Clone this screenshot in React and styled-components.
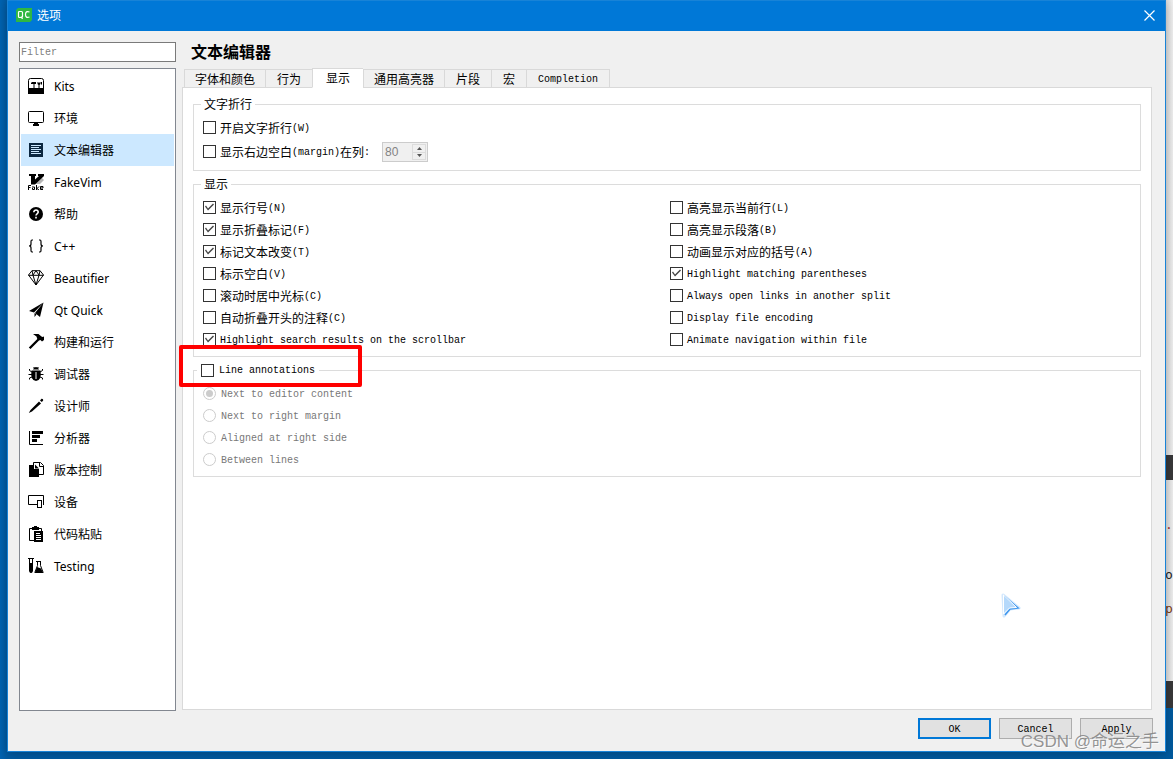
import React from 'react';
import styled, { createGlobalStyle, css } from 'styled-components';

const cjk = '"Noto Sans CJK SC", sans-serif';
const mono = `"Liberation Mono", ${cjk}`;

const GlobalStyle = createGlobalStyle`
  *, *::before, *::after { box-sizing: border-box; }
  body { margin: 0; font: 12px/14px ${cjk}; color: #000; }
  button, input { font: inherit; color: inherit; margin: 0; }
`;

/* ---------- desktop and window frame ---------- */

const Desktop = styled.div`
  display: flex;
  min-height: 100vh;
  padding-left: 7px;
  overflow: hidden;
  background: linear-gradient(90deg, #0063b1 0, #005ba3 7px, #005a9e 100%);
`;

const Window = styled.main`
  position: relative;
  z-index: 1;
  flex: 1;
  min-width: 0;
  display: flex;
  flex-direction: column;
  margin-bottom: 7px;
  border: 1px solid #1883d7;
  background: #f0f0f0;
  box-shadow: 0 2px 10px rgba(0, 0, 0, 0.25);
`;

const TitleBar = styled.header`
  display: flex;
  align-items: center;
  gap: 5px;
  height: 30px;
  padding: 0 8px 2px;
  background: #0078d7;
  color: #fff;
`;

const TitleText = styled.span`
  flex: 1;
`;

const CloseButton = styled.button`
  display: flex;
  padding: 2px;
  border: 0;
  background: none;
`;

const Body = styled.div`
  flex: 1;
  display: flex;
  gap: 6px;
  padding: 11px 13px 0 11px;
`;

/* ---------- sidebar ---------- */

const Sidebar = styled.aside`
  display: flex;
  flex-direction: column;
  gap: 6px;
  width: 157px;
`;

const FilterInput = styled.input`
  width: 100%;
  height: 20px;
  padding: 0 1px;
  border: 1px solid #7a7a7a;
  border-radius: 0;
  outline: none;
  background: #fff;
  font: 10px/14px ${mono};
  &::placeholder { color: #808080; opacity: 1; }
`;

const CategoryList = styled.nav`
  flex: 1;
  display: flex;
  flex-direction: column;
  padding: 1px;
  border: 1px solid #828790;
  background: #fff;
`;

const Category = styled.a`
  display: flex;
  align-items: center;
  gap: 10px;
  height: 32px;
  padding: 0 7px;
  font-family: "Noto Sans", ${cjk};
  color: #000;
  text-decoration: none;
  background: ${(p) => (p.$active ? '#cce8ff' : 'transparent')};
`;

const CategoryLabel = styled.span`
  padding-top: 2px;
`;

/* ---------- page ---------- */

const Page = styled.section`
  flex: 1;
  min-width: 0;
  display: flex;
  flex-direction: column;
  padding-bottom: 1px;
`;

const PageTitle = styled.h1`
  margin: 0 0 8px 9px;
  font-size: 16px;
  line-height: 18px;
  font-weight: 700;
`;

const TabBar = styled.div`
  display: flex;
  align-items: flex-end;
  height: 20px;
  padding-left: 2px;
  margin-bottom: -1px;
  z-index: 1;
`;

const Tab = styled.button`
  height: 19px;
  padding: 0 ${(p) => (p.$tight ? 10 : 11)}px;
  border: 1px solid #d9d9d9;
  border-right-width: 0;
  background: #f0f0f0;
  white-space: nowrap;
  &:last-child { border-right-width: 1px; }
  ${(p) => p.$active && css`
    height: 20px;
    padding: 0 13px 1px;
    border-bottom-color: #fff;
    background: #fff;
  `}
`;

const Panel = styled.div`
  position: relative;
  flex: 1;
  display: flex;
  flex-direction: column;
  gap: 6px;
  padding: 9px 10px;
  border: 1px solid #d9d9d9;
  background: #fff;
`;

const Group = styled.fieldset`
  position: relative;
  min-width: 0;
  margin: 0;
  padding: 5px 9px 6px;
  border: 1px solid #dcdcdc;
`;

const Legend = styled.legend`
  height: 14px;
  margin-left: ${(p) => (p.$checkable ? '-6px' : '-2px')};
  padding: ${(p) => (p.$checkable ? '0 4px' : '0 3px')};
`;

const Columns = styled.div`
  display: grid;
  grid-template-columns: 1fr 1fr;
  column-gap: 6px;
`;

const Stack = styled.div`
  display: flex;
  flex-direction: column;
  gap: ${(p) => p.$gap || 0}px;
  padding-bottom: ${(p) => p.$gap || 0}px;
`;

const Row = styled.div`
  display: flex;
  align-items: flex-end;
  gap: 12px;
`;

const Option = styled.label`
  display: flex;
  align-items: center;
  gap: ${(p) => (p.$wide ? 5 : 4)}px;
  height: ${(p) => (p.$legend ? 14 : 22)}px;
  white-space: nowrap;
  color: ${(p) => (p.$disabled ? '#787878' : '#000')};
  & > span { padding-top: ${(p) => (p.$legend ? 0 : 2)}px; }
`;

const Check = styled.input.attrs({ type: 'checkbox' })`
  appearance: none;
  flex: none;
  width: 13px;
  height: 13px;
  border: 1px solid #333;
  background: #fff;
  &:checked::before {
    content: '';
    display: block;
    height: 11px;
    background: #444;
    clip-path: polygon(1px 5px, 2px 4px, 4px 7px, 9px 2px, 10px 3px, 4px 9px);
  }
`;

const Radio = styled.input.attrs({ type: 'radio' })`
  appearance: none;
  flex: none;
  width: 13px;
  height: 13px;
  padding: 2px;
  border: 1px solid #ccc;
  border-radius: 50%;
  background: #fff;
  &:checked::before {
    content: '';
    display: block;
    height: 7px;
    border-radius: 50%;
    background: #ccc;
  }
`;

const Latin = styled.span`
  font: 10px/8px ${mono};
  vertical-align: 2px;
`;

const Spinner = styled.div`
  display: flex;
  width: 46px;
  height: 20px;
  padding: 1px;
  border: 1px solid #ccc;
  background: #f0f0f0;
`;

const SpinnerInput = styled.input`
  flex: 1;
  min-width: 0;
  padding: 0 1px;
  border: 0;
  background: none;
  font-family: "Liberation Sans", sans-serif;
  color: #838383;
  appearance: textfield;
  &::-webkit-inner-spin-button { appearance: none; }
`;

const SpinnerButtons = styled.div`
  display: flex;
  flex-direction: column;
  width: 14px;
  border: 1px solid #dcdcdc;
`;

const SpinnerButton = styled.button`
  flex: 1;
  display: flex;
  align-items: center;
  justify-content: center;
  min-height: 0;
  padding: 0;
  border: 0;
  background: none;
  & + & { border-top: 1px solid #dcdcdc; }
`;

/* ---------- footer and overlays ---------- */

const Footer = styled.footer`
  display: flex;
  justify-content: flex-end;
  gap: 8px;
  padding: 7px 12px 12px;
`;

const DialogButton = styled.button`
  width: 73px;
  height: 21px;
  padding: 1px 0 0;
  border: ${(p) => (p.$primary ? '2px solid #0078d7' : '1px solid #adadad')};
  background: #e1e1e1;
`;

const Highlight = styled.div`
  position: absolute;
  top: -32px;
  left: -15px;
  width: 183px;
  height: 42px;
  border: 4px solid #f00;
  border-radius: 2px;
  pointer-events: none;
`;

const Pointer = styled.svg`
  position: absolute;
  right: 129px;
  bottom: 90px;
`;

const Watermark = styled.div`
  position: absolute;
  right: 6px;
  bottom: -1px;
  font: 17px/20px "Liberation Sans", ${cjk};
  color: rgba(130, 130, 130, 0.85);
  text-shadow: 1px 1px 0 rgba(255, 255, 255, 0.7);
  white-space: nowrap;
  pointer-events: none;
`;

/* ---------- editor window showing behind the dialog ---------- */

const Behind = styled.div`
  display: flex;
  flex-direction: column;
  width: 7px;
  margin-bottom: 51px;
  overflow: hidden;
  font: 13px/34px "DejaVu Sans Mono", monospace;
`;

const Paper = styled.div`
  display: flex;
  flex-direction: column;
  flex: ${(p) => p.$share} 0 0;
  min-height: 0;
  background: linear-gradient(90deg, #dcdcdc, #f0f0f0);
`;

const Bar = styled.div`
  height: ${(p) => p.$height}px;
  background: #38383a;
`;

const CodeLine = styled.div`
  height: ${(p) => p.$height}px;
  margin-top: ${(p) => p.$top || 0}px;
  text-indent: -1px;
  color: ${(p) => p.$color || '#222'};
`;

/* ---------- icons ---------- */

const Svg = ({ children }) => (
  <svg width="16" height="16" viewBox="0 0 16 16" fill="#000" aria-hidden="true">{children}</svg>
);
const line = { fill: 'none', stroke: '#000' };

const icons = {
  kits: (
    <Svg>
      <path d="M.5 11V2.500q0-2 2-2h11q2 0 2 2V11" {...line} />
      <path d="M0 10h16v6H0z" />
      <path d="M3 5l1-1h4v2H6.500v4.500h-1V6H3zM9.500 4v2l1 1v3.500h1V7l1-1V4h-1v1h-1V4zM13 4h1v2.500h-1z" />
    </Svg>
  ),
  env: (
    <Svg>
      <rect x=".5" y="1.500" width="15" height="11" rx="1" {...line} />
      <path d="M6 13h4v1h1v2H5v-2h1z" />
    </Svg>
  ),
  editor: (
    <Svg>
      <path fill="#0b2740" d="M1 1h14v14H1z" />
      <path d="M3 3.500h10M3 5.500h8M3 7.500h10M3 9.500h8M3 11.500h10" fill="none" stroke="#cce8ff" />
    </Svg>
  ),
  vim: (
    <Svg>
      <path fill="#b4b4b4" d="m12 2 4 4-4 4H6z" />
      <path d="M1 0h7v2H7v3.500L11 2h-1V0h6v2L7 10.500H3V2H1z" />
      <path
        d="M.5 16v-4.500H3M.5 13.500h2M4 13h2.500v2.500H4.500V14M8.500 11v5M11 12.500l-2 2 2 1.500M15 15.500h-2.500v-3H15v1.500h-2"
        {...line}
      />
    </Svg>
  ),
  help: (
    <Svg>
      <circle cx="8" cy="8" r="7" />
      <path d="M5.800 6.200c0-3 4.600-2.800 4.400 0C10 7.800 8 7.800 8 9.500M8 10.700v1.800" fill="none" stroke="#fff" strokeWidth="1.600" />
    </Svg>
  ),
  cpp: (
    <Svg>
      <path
        d="M5 2H4Q3 2 3 3.500V6q0 2-2 2 2 0 2 2v2.500Q3 14 4 14h1M11 2h1q1 0 1 1.500V6q0 2 2 2-2 0-2 2v2.500q0 1.500-1 1.500h-1"
        {...line}
        strokeWidth="1.200"
      />
    </Svg>
  ),
  beautifier: (
    <Svg>
      <path d="M4 .7h8L15.500 5 8 15 .5 5zM.5 5.300h15M4 .7l1 4.600L8 15l3-9.700 1-4.600M5 5 8 .7 11 5" {...line} />
    </Svg>
  ),
  quick: (
    <Svg>
      <path d="M15.500.5 1 9l5 1.500zM15.500.5 7 11l5 4zM6.500 11v4l2-2.500z" />
    </Svg>
  ),
  build: (
    <Svg>
      <path d="M5 0h5.500l3 2.500 1 .5 1.500-.5V6l-2 1.500L12.500 6 11 6.500 2.500 15 .8 13.500 9.300 5 8.500 2.500z" />
    </Svg>
  ),
  debug: (
    <Svg>
      <path d="M5 3.500Q5.500 1 8 1t3 2.500zM3.500 4.500h9q1.500 10-4.500 10.500Q2 14.500 3.500 4.500" />
      <path d="M1.500 3v1.500L4 6M14.500 3v1.500L12 6M.5 8.500h15M1.500 13.500V12L4 11M14.500 13.500V12L12 11M5.500 1l1 1M10.500 1l-1 1" {...line} />
      <path d="M8 6v7" stroke="#fff" />
    </Svg>
  ),
  design: (
    <Svg>
      <path d="M11 3.500 13 5.500 4 13.500.8 15 2.500 12zM12 2.500l1.500-1.700q2-.3 1.700 1.700L13.800 4z" />
    </Svg>
  ),
  analyzer: (
    <Svg>
      <path d="M1.500 1v13.500H15" {...line} />
      <path d="M4 1h11v3H4zM4 5h8v3H4zM4 9h5v3H4z" />
    </Svg>
  ),
  vcs: (
    <Svg>
      <path d="M5.500 3V.5h7l3 3v9H11M11.500 .5v4h4" {...line} />
      <path d="M1 3h5v4h5v8H1zM7 2.500l4 4H7z" />
    </Svg>
  ),
  devices: (
    <Svg>
      <path d="M9 10.500H.5v-9h15V11" {...line} />
      <rect x="9.500" y="6.500" width="4" height="7" {...line} />
      <path d="M10 13h3v1h-3z" />
    </Svg>
  ),
  paste: (
    <Svg>
      <path d="M6 14.500H1.500v-12h12V6" {...line} />
      <path d="M4 1h2V0h3v1h2v3H4zM6 5h9v11H6z" />
      <path d="M8 7.500h4M8 9.500h5M8 11.500h5M8 13.500h5" stroke="#fff" />
    </Svg>
  ),
  testing: (
    <Svg>
      <path d="M0 .5h6M1.500 1v12.500q0 1 1.500 1t1.500-1V1M8 3.500h5M9.500 4v3.500L6.800 14.500h8.400L12.500 7.500V4" {...line} />
      <path d="M2 5h2v9H2zM9 9l4 1.500 2 4H7z" />
    </Svg>
  ),
};

const categories = [
  ['kits', 'Kits'],
  ['env', '环境'],
  ['editor', '文本编辑器'],
  ['vim', 'FakeVim'],
  ['help', '帮助'],
  ['cpp', 'C++'],
  ['beautifier', 'Beautifier'],
  ['quick', 'Qt Quick'],
  ['build', '构建和运行'],
  ['debug', '调试器'],
  ['design', '设计师'],
  ['analyzer', '分析器'],
  ['vcs', '版本控制'],
  ['devices', '设备'],
  ['paste', '代码粘贴'],
  ['testing', 'Testing'],
];

const tabs = ['字体和颜色', '行为', '显示', '通用高亮器', '片段', '宏', 'Completion'];

const displayLeft = [
  ['显示行号(N)', true],
  ['显示折叠标记(F)', true],
  ['标记文本改变(T)', true],
  ['标示空白(V)', false],
  ['滚动时居中光标(C)', false],
  ['自动折叠开头的注释(C)', false],
  ['Highlight search results on the scrollbar', true],
];

const displayRight = [
  ['高亮显示当前行(L)', false],
  ['高亮显示段落(B)', false],
  ['动画显示对应的括号(A)', false],
  ['Highlight matching parentheses', true],
  ['Always open links in another split', false],
  ['Display file encoding', false],
  ['Animate navigation within file', false],
];

const annotations = ['Next to editor content', 'Next to right margin', 'Aligned at right side', 'Between lines'];

/* Latin runs use a smaller monospaced face, two of whose cells fill one Chinese cell. */
const Text = ({ children }) => (
  <span>
    {children.split(/([ -~]+)/).map((part, i) => (i % 2 ? <Latin key={i}>{part}</Latin> : part))}
  </span>
);

const CheckOption = ({ label, checked = false, ...rest }) => (
  <Option {...rest}>
    <Check defaultChecked={checked} />
    <Text>{label}</Text>
  </Option>
);

export default function App() {
  return (
    <Desktop>
      <GlobalStyle />
      <Window>
        <TitleBar>
          <svg width="16" height="14" viewBox="0 0 16 14" aria-hidden="true">
            <path d="M2 0h14v12l-2 2H0V2z" fill="#2fb742" />
            <path d="M5.500 3.500h-2q-1 0-1 1v4q0 1 1 1h2q1 0 1-1v-4q0-1-1-1zM5 8.500l1.500 2.500M13.500 4q-4-1.500-4 2.500t4 2.500" fill="none" stroke="#fff" strokeWidth="1.200" />
          </svg>
          <TitleText>选项</TitleText>
          <CloseButton aria-label="关闭">
            <svg width="11" height="11" viewBox="0 0 11 11">
              <path d="m.5.5 10 10m0-10-10 10" stroke="#fff" strokeWidth="1.200" />
            </svg>
          </CloseButton>
        </TitleBar>

        <Body>
          <Sidebar>
            <FilterInput placeholder="Filter" aria-label="Filter" />
            <CategoryList>
              {categories.map(([icon, label]) => (
                <Category key={icon} href={`#${icon}`} $active={icon === 'editor'}>
                  {icons[icon]}
                  <CategoryLabel>{label}</CategoryLabel>
                </Category>
              ))}
            </CategoryList>
          </Sidebar>

          <Page>
            <PageTitle>文本编辑器</PageTitle>
            <TabBar role="tablist">
              {tabs.map((tab) => (
                <Tab
                  key={tab}
                  role="tab"
                  aria-selected={tab === '显示'}
                  $active={tab === '显示'}
                  $tight={tab.length === 5}
                >
                  <Text>{tab}</Text>
                </Tab>
              ))}
            </TabBar>
            <Panel role="tabpanel">
              <Group>
                <Legend>文字折行</Legend>
                <Stack $gap={2}>
                  <CheckOption label="开启文字折行(W)" />
                  <Row>
                    <CheckOption label="显示右边空白(margin)在列:" />
                    <Spinner>
                      <SpinnerInput type="number" defaultValue={80} disabled aria-label="列" />
                      <SpinnerButtons>
                        <SpinnerButton disabled aria-label="增加">
                          <svg width="5" height="3"><path d="M0 3 2.500 0 5 3z" fill="#555" /></svg>
                        </SpinnerButton>
                        <SpinnerButton disabled aria-label="减少">
                          <svg width="5" height="3"><path d="M0 0 2.500 3 5 0z" fill="#555" /></svg>
                        </SpinnerButton>
                      </SpinnerButtons>
                    </Spinner>
                  </Row>
                </Stack>
              </Group>

              <Group>
                <Legend>显示</Legend>
                <Columns>
                  {[displayLeft, displayRight].map((items, i) => (
                    <Stack key={i}>
                      {items.map(([label, checked]) => (
                        <CheckOption key={label} label={label} checked={checked} />
                      ))}
                    </Stack>
                  ))}
                </Columns>
              </Group>

              <Group>
                <Legend $checkable>
                  <CheckOption label="Line annotations" $legend $wide />
                </Legend>
                <Stack>
                  {annotations.map((label, i) => (
                    <Option key={label} $disabled $wide>
                      <Radio name="annotations" defaultChecked={i === 0} disabled />
                      <Text>{label}</Text>
                    </Option>
                  ))}
                </Stack>
                <Highlight />
              </Group>

              <Pointer width="22" height="26" viewBox="0 0 22 26" aria-hidden="true">
                <path d="M3 2 19 15l-9 1-6 7z" fill="#a9d3fb" stroke="#d3e8fd" strokeWidth="3" strokeLinejoin="round" />
                <path d="m4 3 14 12-8 1-5 6" fill="#b5d9fb" stroke="#3f97ee" strokeWidth="1.500" />
                <path d="M3.500 2v19l6-6 7-.5z" fill="#b5d9fb" stroke="#fff" />
              </Pointer>
            </Panel>
          </Page>
        </Body>

        <Footer>
          <DialogButton $primary><Text>OK</Text></DialogButton>
          <DialogButton><Text>Cancel</Text></DialogButton>
          <DialogButton><Text>Apply</Text></DialogButton>
        </Footer>
        <Watermark>CSDN @命运之手</Watermark>
      </Window>

      <Behind aria-hidden="true">
        <Paper $share={455} />
        <Bar $height={25} />
        <Paper $share={201}>
          <CodeLine $top={28} $height={50} $color="#a33">.</CodeLine>
          <CodeLine $height={34}>o</CodeLine>
          <CodeLine $height={34} $color="#7a3a10">p</CodeLine>
        </Paper>
        <Bar $height={27} />
      </Behind>
    </Desktop>
  );
}
